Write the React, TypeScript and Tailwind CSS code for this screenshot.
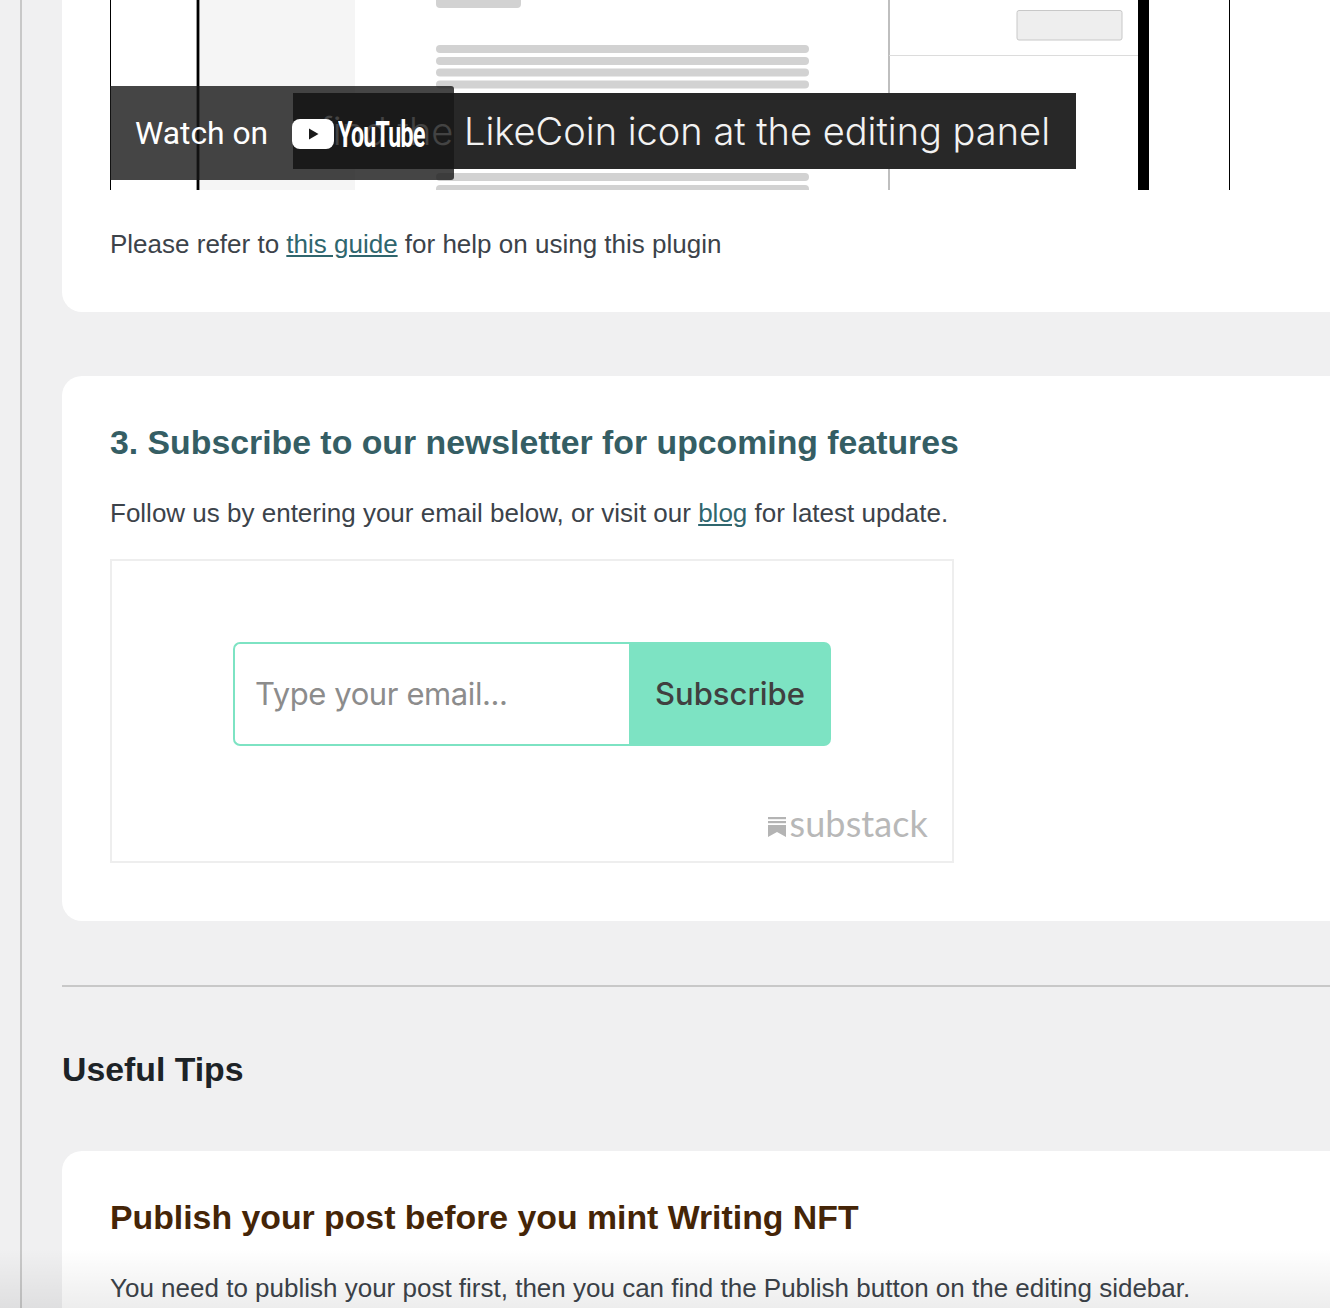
export default function App() {
  const body = "font-['Liberation_Sans',Arial,sans-serif] text-[26px] leading-[38px] text-[#3c434a]";
  return (
    <div className="relative h-[1308px] w-[1330px] overflow-hidden bg-[#f0f0f1] font-['Liberation_Sans',Arial,sans-serif]">
      <div className="flex h-full">
        <div className="w-[22px] shrink-0 border-r-2 border-[#c8c8c8] bg-[#f0f0f1]" />
        <main className="ml-[40px] w-[1300px] shrink-0">
          {/* Card 1 */}
          <section className="rounded-b-[20px] bg-white pb-[49px] pl-[48px]">
            <div className="relative h-[190px] w-[1120px] overflow-hidden bg-white">
              <svg className="absolute inset-0" width="1120" height="190" viewBox="0 0 1120 190" fill="none">
                <rect x="88" y="0" width="157" height="190" fill="#f5f5f5" />
                <rect x="0" y="0" width="1" height="190" fill="#000" />
                <rect x="86.6" y="0" width="2.8" height="190" fill="#000" />
                <rect x="326" y="-8" width="85" height="16" rx="4" fill="#d2d2d2" />
                <rect x="326" y="45" width="373" height="8" rx="4" fill="#d2d2d2" />
                <rect x="326" y="57" width="373" height="8" rx="4" fill="#d2d2d2" />
                <rect x="326" y="68.5" width="373" height="8" rx="4" fill="#d2d2d2" />
                <rect x="326" y="80.5" width="373" height="8" rx="4" fill="#d2d2d2" />
                <rect x="326" y="173" width="373" height="8" rx="4" fill="#d2d2d2" />
                <rect x="326" y="185" width="373" height="8" rx="4" fill="#d2d2d2" />
                <rect x="778.5" y="0" width="1" height="190" fill="#808080" />
                <rect x="779" y="55" width="249" height="1" fill="#dcdcdc" />
                <rect x="907" y="10.5" width="105" height="29.5" rx="2" fill="#eeeeee" stroke="#c8c8c8" />
                <rect x="1028" y="0" width="11" height="190" fill="#000" />
                <rect x="1119" y="0" width="1" height="190" fill="#000" />
              </svg>
              <div className="absolute left-[183px] top-[93px] flex h-[76px] w-[783px] items-center justify-end whitespace-nowrap bg-[#282828] pr-[26px] font-['Inter',sans-serif] text-[38px] font-light text-[#f2f2f2]">
                find the LikeCoin icon at the editing panel
              </div>
              <div className="absolute left-0 top-[86px] flex h-[94px] w-[344px] items-center rounded-r-[3px] bg-[rgba(23,23,23,0.8)] pl-[25px] pt-[2px] text-white">
                <span className="whitespace-nowrap font-['Roboto',sans-serif] text-[31.8px] font-normal">Watch on</span>
                <svg className="ml-[24px] shrink-0" width="42" height="30" viewBox="0 0 42 30">
                  <rect width="42" height="30" rx="8" fill="#fff" />
                  <path d="M17 9.5 L26.5 15 L17 20.5 Z" fill="#1a1a1a" />
                </svg>
                <span className="ml-[4px] origin-left scale-x-[0.68] scale-y-[1.08] whitespace-nowrap font-['Roboto',sans-serif] text-[34px] font-bold tracking-[-1px]">YouTube</span>
              </div>
            </div>
            <p className={`mt-[35px] ${body}`}>
              Please refer to <a className="text-[#2f666e] underline">this guide</a> for help on using this plugin
            </p>
          </section>

          {/* Card 2 */}
          <section className="mt-[64px] rounded-l-[20px] bg-white pb-[58px] pl-[48px] pt-[45px]">
            <h2 className="text-[33.8px] font-bold leading-[42px] text-[#355e64]">3. Subscribe to our newsletter for upcoming features</h2>
            <p className={`mt-[31px] ${body}`}>
              Follow us by entering your email below, or visit our <a className="text-[#2f666e] underline">blog</a> for latest update.
            </p>
            <div className="mt-[27px] h-[304px] w-[844px] border-2 border-[#eeeeee] bg-white pt-[81px]">
              <form className="mx-auto flex h-[104px] w-[598px]">
                <div className="flex w-[396px] items-center rounded-l-[7px] border-2 border-r-0 border-[#7de3c3] bg-white pl-[20px] pt-[1px] font-['Inter',sans-serif] text-[31px] tracking-[-0.4px] text-[#8c8c8c]">
                  Type your email...
                </div>
                <button type="button" className="w-[202px] rounded-r-[7px] bg-[#7de3c3] pt-[1px] font-['Inter',sans-serif] text-[31px] font-medium text-[#404040]">
                  Subscribe
                </button>
              </form>
              <div className="mt-[55px] flex items-center justify-end pr-[24px]">
                <svg width="18" height="20" viewBox="0 0 18 20" className="mr-[4px] mt-[7px]">
                  <rect x="0" y="0" width="18" height="2.2" fill="#b4b4b4" />
                  <rect x="0" y="4" width="18" height="2.2" fill="#b4b4b4" />
                  <path d="M0 8 H18 V20 L9 15 L0 20 Z" fill="#b4b4b4" />
                </svg>
                <span className="font-['Lato',sans-serif] text-[36px] font-normal leading-[44px] tracking-[0.1px] text-[#b8b8b8]">substack</span>
              </div>
            </div>
          </section>

          <hr className="mt-[64px] h-[2px] border-0 bg-[#c8c8c8]" />

          <h2 className="mt-[61px] text-[33.8px] font-bold leading-[42px] text-[#1d2327]">Useful Tips</h2>

          {/* Card 3 */}
          <section className="mt-[61px] rounded-t-[20px] bg-white pl-[48px] pt-[45px] pb-[60px]">
            <h3 className="text-[33.8px] font-bold leading-[42px] text-[#452507]">Publish your post before you mint Writing NFT</h3>
            <p className={`mt-[31px] ${body}`}>
              You need to publish your post first, then you can find the Publish button on the editing sidebar.
            </p>
          </section>
        </main>
      </div>
      <div className="pointer-events-none absolute inset-x-0 bottom-0 h-[60px] bg-gradient-to-b from-transparent to-[rgba(0,0,0,0.07)]" />
    </div>
  );
}
